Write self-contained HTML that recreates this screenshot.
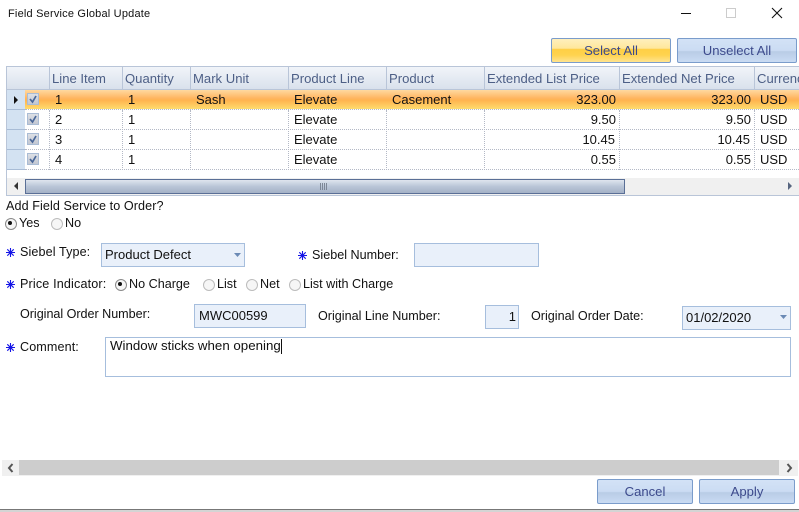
<!DOCTYPE html>
<html><head><meta charset="utf-8"><style>
html,body{margin:0;padding:0;background:#fff}
body{width:799px;height:512px;position:relative;overflow:hidden;font-family:"Liberation Sans",sans-serif;font-size:13px;color:#111}
div{position:absolute;box-sizing:border-box}
.t{position:absolute;white-space:nowrap;line-height:14px}
.l{font-size:12.6px}
.h{position:absolute;top:72px;white-space:nowrap;line-height:14px;color:#4d5f86;font-size:13.1px}
.vh{position:absolute;top:67px;height:22px;width:1px;background:#b9c5d8}
.v{position:absolute;top:110px;height:60px;width:0;border-left:1px dotted #b4b9c6}
.r{position:absolute;left:25px;width:774px;height:0;border-top:1px dotted #b4b9c6}
.rh{position:absolute;left:7px;width:18px;height:20px;background:#d3e2f2;border-bottom:1px solid #a8bcd6}
.cb{position:absolute;left:27px;width:12px;height:12px;background:linear-gradient(#dcdfe5,#c2c7d2);border:1px solid #a9bcd5}
.f{position:absolute;background:#e9f0fa;border:1px solid #a6bedd}
.btn{position:absolute;border:1px solid #7a9ccb;border-radius:2px;text-align:center;color:#3c4a8c;font-size:13.1px;background:linear-gradient(#d3e2f6 0,#cbdcf3 50%,#b9cce6 55%,#c9dbf3 100%)}
.rad{position:absolute;width:10px;height:10px;border-radius:50%;border:1px solid #bcbcbc;background:#f6f6f6}
.rad.on{border-color:#8a8a8a}
.rad.on:after{content:"";position:absolute;left:2px;top:2px;width:4px;height:4px;border-radius:50%;background:#111}
.star{position:absolute;width:9px;height:9px}
</style></head><body>

<span class="t" style="left:8px;top:7px;font-size:11px;letter-spacing:.2px">Field Service Global Update</span>
<svg style="position:absolute;left:670px;top:0" width="129" height="26"><path d="M11 13.500H21" stroke="#111" stroke-width="1"/><rect x="56.500" y="8.500" width="9" height="9" fill="none" stroke="#ccc"/><path d="M102 8L112 18M112 8L102 18" stroke="#111" stroke-width="1.100"/></svg>

<div class="btn" style="left:551px;top:38px;width:120px;height:25px;line-height:23px;background:linear-gradient(#fff0bd 0,#ffe79c 40%,#ffcf45 45%,#ffd34f 70%,#ffe490 100%)">Select All</div>
<div class="btn" style="left:677px;top:38px;width:120px;height:25px;line-height:23px">Unselect All</div>

<!-- grid -->
<div style="left:6px;top:66px;width:793px;height:130px;border:1px solid #b9c5d8;border-right:0;background:#fff"></div>
<div style="left:7px;top:67px;width:792px;height:23px;background:linear-gradient(#f1f4f9,#d9e1ec);border-bottom:1px solid #b9c5d8"></div>
<i class="vh" style="left:49px"></i><i class="vh" style="left:122px"></i><i class="vh" style="left:190px"></i><i class="vh" style="left:288px"></i><i class="vh" style="left:386px"></i><i class="vh" style="left:484px"></i><i class="vh" style="left:619px"></i><i class="vh" style="left:754px"></i>
<span class="h" style="left:52px">Line Item</span>
<span class="h" style="left:125px">Quantity</span>
<span class="h" style="left:193px">Mark Unit</span>
<span class="h" style="left:291px">Product Line</span>
<span class="h" style="left:389px">Product</span>
<span class="h" style="left:487px">Extended List Price</span>
<span class="h" style="left:622px">Extended Net Price</span>
<span class="h" style="left:757px">Currency</span>

<div style="left:25px;top:90px;width:774px;height:19px;background:linear-gradient(#ffd9a0 0,#ffb45e 45%,#ffb44f 55%,#ffdc6e 100%)"></div>
<div class="rh" style="top:90px"></div><div class="rh" style="top:110px"></div><div class="rh" style="top:130px"></div><div class="rh" style="top:150px"></div>
<svg style="position:absolute;left:13px;top:96px" width="6" height="8"><path d="M1 0L5 4L1 8Z" fill="#111"/></svg>
<i class="v" style="left:49px"></i><i class="v" style="left:122px"></i><i class="v" style="left:190px"></i><i class="v" style="left:288px"></i><i class="v" style="left:386px"></i><i class="v" style="left:484px"></i><i class="v" style="left:619px"></i><i class="v" style="left:754px"></i>
<i class="r" style="top:109px"></i><i class="r" style="top:129px"></i><i class="r" style="top:149px"></i><i class="r" style="top:169px"></i>

<div class="cb" style="top:93px"></div><div class="cb" style="top:113px"></div><div class="cb" style="top:133px"></div><div class="cb" style="top:153px"></div>
<svg style="position:absolute;left:27px;top:93px" width="12" height="72"><g fill="none" stroke="#4a6899" stroke-width="1.700"><path d="M3 6L5.500 9L9 3"/><path d="M3 26L5.500 29L9 23"/><path d="M3 46L5.500 49L9 43"/><path d="M3 66L5.500 69L9 63"/></g></svg>

<span class="t" style="left:55px;top:93px">1</span><span class="t" style="left:128px;top:93px">1</span><span class="t" style="left:196px;top:93px">Sash</span><span class="t" style="left:294px;top:93px">Elevate</span><span class="t" style="left:392px;top:93px">Casement</span>
<span class="t" style="right:183px;top:93px">323.00</span><span class="t" style="right:48px;top:93px">323.00</span><span class="t" style="left:760px;top:93px">USD</span>

<span class="t" style="left:55px;top:113px">2</span><span class="t" style="left:128px;top:113px">1</span><span class="t" style="left:294px;top:113px">Elevate</span>
<span class="t" style="right:183px;top:113px">9.50</span><span class="t" style="right:48px;top:113px">9.50</span><span class="t" style="left:760px;top:113px">USD</span>

<span class="t" style="left:55px;top:133px">3</span><span class="t" style="left:128px;top:133px">1</span><span class="t" style="left:294px;top:133px">Elevate</span>
<span class="t" style="right:184px;top:133px">10.45</span><span class="t" style="right:49px;top:133px">10.45</span><span class="t" style="left:760px;top:133px">USD</span>

<span class="t" style="left:55px;top:153px">4</span><span class="t" style="left:128px;top:153px">1</span><span class="t" style="left:294px;top:153px">Elevate</span>
<span class="t" style="right:183px;top:153px">0.55</span><span class="t" style="right:48px;top:153px">0.55</span><span class="t" style="left:760px;top:153px">USD</span>

<!-- grid scrollbar -->
<div style="left:7px;top:178px;width:792px;height:17px;background:#f0f0f0"></div>
<div style="left:25px;top:179px;width:600px;height:15px;border:1px solid #5a6f96;background:linear-gradient(#dfe5ee,#b9c5d7 50%,#a4b1c6)"></div>
<svg style="position:absolute;left:13px;top:182px" width="6" height="9"><path d="M5 0V8L1 4Z" fill="#333"/></svg>
<svg style="position:absolute;left:787px;top:182px" width="6" height="9"><path d="M1 0V8L5 4Z" fill="#56657f"/></svg>
<svg style="position:absolute;left:320px;top:183px" width="9" height="7"><path d="M.5 0V7M2.500 0V7M4.500 0V7M6.500 0V7" stroke="#7d8796"/></svg>

<!-- form -->
<span class="t l" style="left:6px;top:199px;letter-spacing:.08px">Add Field Service to Order?</span>
<span class="rad on" style="left:5px;top:218px"></span><span class="t l" style="left:19px;top:216px">Yes</span>
<span class="rad" style="left:51px;top:218px"></span><span class="t l" style="left:65px;top:216px">No</span>

<svg class="star" style="left:6px;top:248px" viewBox="0 0 9 9"><path d="M4.500 0V9M0 4.500H9M1.300 1.300L7.700 7.700M7.700 1.300L1.300 7.700" stroke="#1414e6" stroke-width="1.100"/></svg>
<span class="t l" style="left:20px;top:245px;letter-spacing:.1px">Siebel Type:</span>
<div class="f" style="left:101px;top:243px;width:144px;height:24px"></div>
<span class="t" style="left:105px;top:248px">Product Defect</span>
<svg style="position:absolute;left:234px;top:253px" width="8" height="5"><path d="M0 0H7L3.500 4Z" fill="#6b8ab5"/></svg>
<svg class="star" style="left:298px;top:251px" viewBox="0 0 9 9"><path d="M4.500 0V9M0 4.500H9M1.300 1.300L7.700 7.700M7.700 1.300L1.300 7.700" stroke="#1414e6" stroke-width="1.100"/></svg>
<span class="t l" style="left:312px;top:248px">Siebel Number:</span>
<div class="f" style="left:414px;top:243px;width:125px;height:24px"></div>

<svg class="star" style="left:6px;top:280px" viewBox="0 0 9 9"><path d="M4.500 0V9M0 4.500H9M1.300 1.300L7.700 7.700M7.700 1.300L1.300 7.700" stroke="#1414e6" stroke-width="1.100"/></svg>
<span class="t l" style="left:20px;top:277px;letter-spacing:.15px">Price Indicator:</span>
<span class="rad on" style="left:115px;top:279px"></span><span class="t l" style="left:129px;top:277px">No Charge</span>
<span class="rad" style="left:203px;top:279px"></span><span class="t l" style="left:217px;top:277px">List</span>
<span class="rad" style="left:246px;top:279px"></span><span class="t l" style="left:260px;top:277px">Net</span>
<span class="rad" style="left:289px;top:279px"></span><span class="t l" style="left:303px;top:277px">List with Charge</span>

<span class="t l" style="left:20px;top:307px;letter-spacing:-.03px">Original Order Number:</span>
<div class="f" style="left:194px;top:304px;width:112px;height:24px"></div>
<span class="t" style="left:199px;top:309px">MWC00599</span>
<span class="t l" style="left:318px;top:309px">Original Line Number:</span>
<div class="f" style="left:485px;top:305px;width:34px;height:24px"></div>
<span class="t" style="right:283px;top:310px">1</span>
<span class="t l" style="left:531px;top:309px">Original Order Date:</span>
<div class="f" style="left:682px;top:306px;width:109px;height:24px"></div>
<span class="t" style="left:686px;top:311px">01/02/2020</span>
<svg style="position:absolute;left:780px;top:315px" width="8" height="5"><path d="M0 0H7L3.500 4Z" fill="#6b8ab5"/></svg>

<svg class="star" style="left:6px;top:343px" viewBox="0 0 9 9"><path d="M4.500 0V9M0 4.500H9M1.300 1.300L7.700 7.700M7.700 1.300L1.300 7.700" stroke="#1414e6" stroke-width="1.100"/></svg>
<span class="t l" style="left:20px;top:340px;letter-spacing:.1px">Comment:</span>
<div style="left:105px;top:337px;width:686px;height:40px;border:1px solid #a6bedd;background:#fff"></div>
<span class="t" style="left:110px;top:339px;font-size:13.300px">Window sticks when opening</span>
<div style="left:281px;top:339px;width:1px;height:15px;background:#111"></div>

<!-- bottom scrollbar -->
<div style="left:2px;top:460px;width:796px;height:16px;background:#f0f0f0"></div>
<div style="left:19px;top:460px;width:760px;height:15px;background:#cdcdcd"></div>
<svg style="position:absolute;left:7px;top:463px" width="7" height="10"><path d="M5.500 1L2 5L5.500 9" fill="none" stroke="#555" stroke-width="2"/></svg>
<svg style="position:absolute;left:786px;top:463px" width="7" height="10"><path d="M1.500 1L5 5L1.500 9" fill="none" stroke="#555" stroke-width="2"/></svg>

<div class="btn" style="left:597px;top:479px;width:96px;height:25px;line-height:23px">Cancel</div>
<div class="btn" style="left:699px;top:479px;width:96px;height:25px;line-height:23px">Apply</div>

<div style="left:0;top:509px;width:799px;height:1px;background:#777"></div>
<div style="left:0;top:510px;width:799px;height:2px;background:#d4d4d4"></div>
</body></html>
